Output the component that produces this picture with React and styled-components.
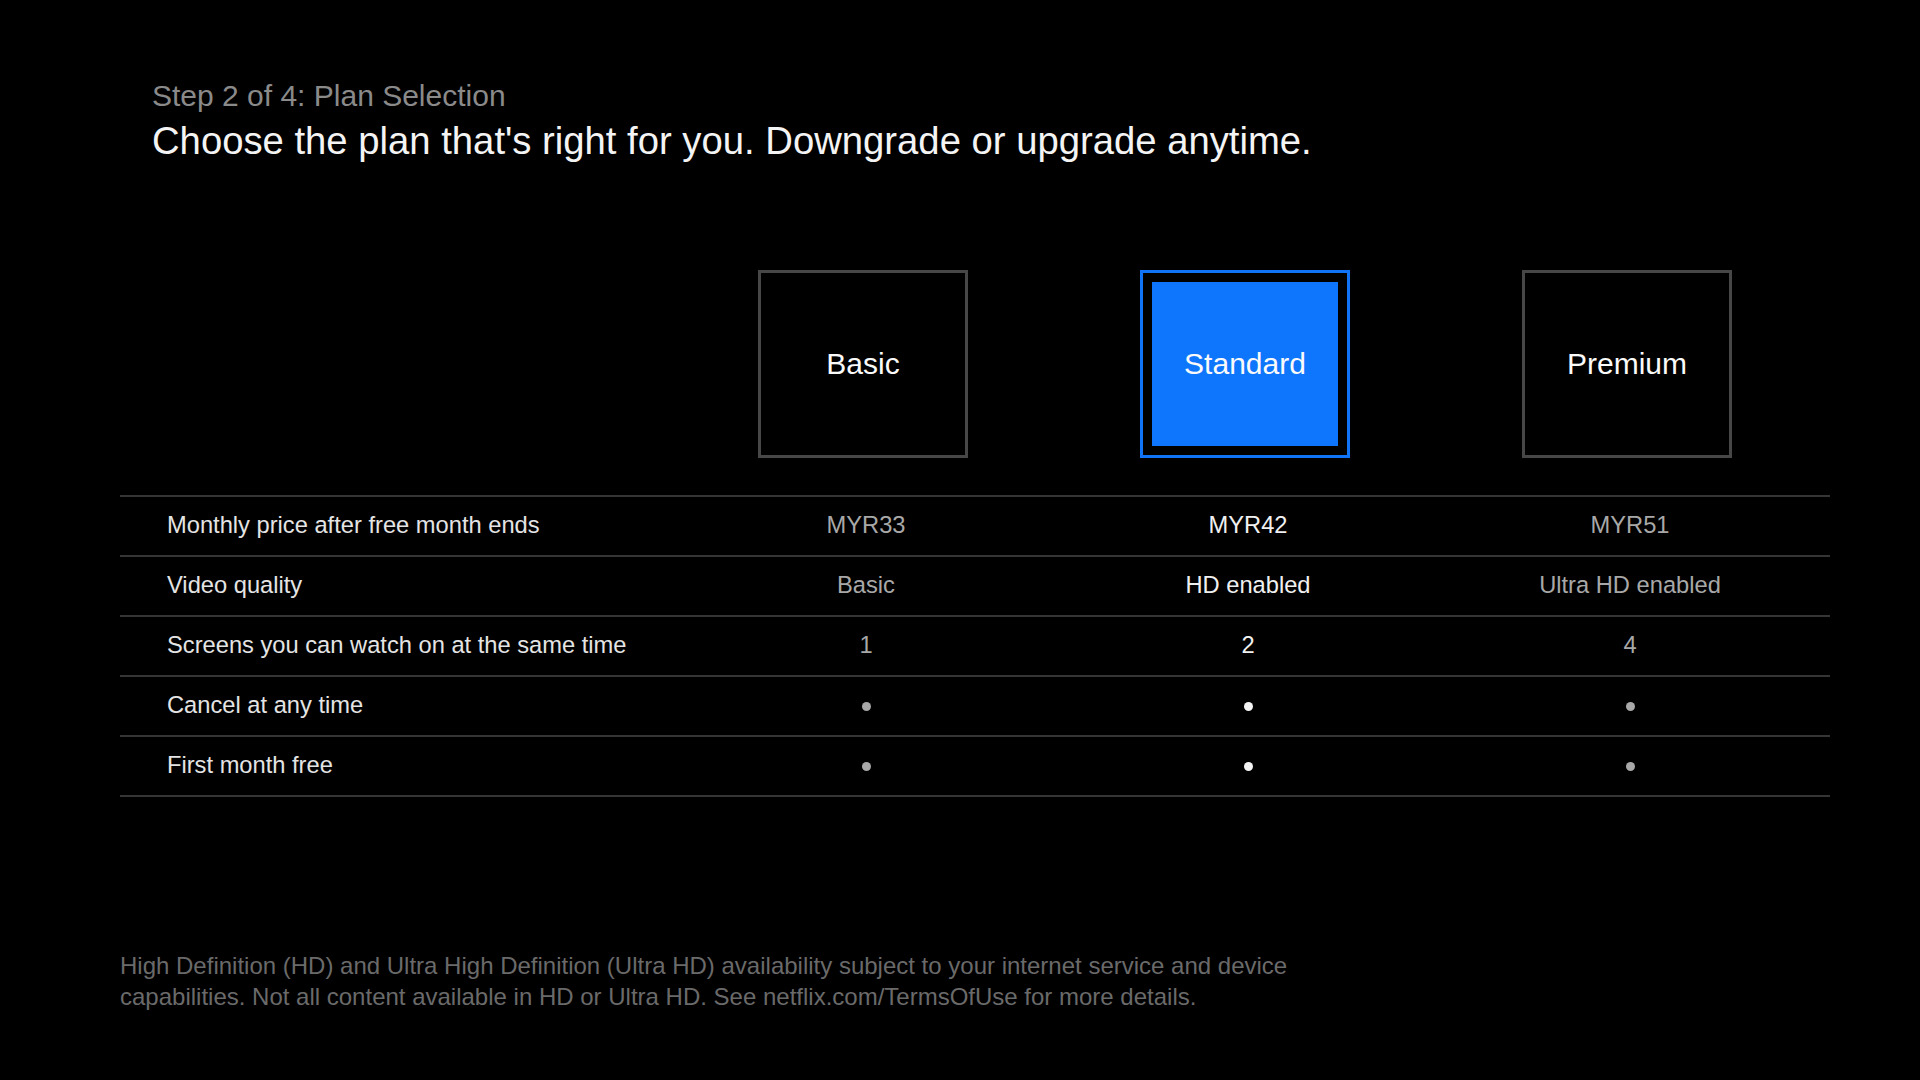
import React from "react";
import styled, { createGlobalStyle } from "styled-components";

const Global = createGlobalStyle`
  html, body {
    margin: 0;
    padding: 0;
    background: #000;
  }
  body {
    font-family: "Liberation Sans", Arial, Helvetica, sans-serif;
    color: #f2f2f2;
    -webkit-font-smoothing: antialiased;
  }
  #root { min-height: 1080px; background: #000; }
`;

const Page = styled.main`
  width: 1920px;
  height: 1080px;
  box-sizing: border-box;
  padding: 78px 90px 0 120px;
  background: #000;
`;

const Header = styled.header`
  padding-left: 32px;
`;

const Step = styled.div`
  font-size: 30px;
  line-height: 36px;
  color: #8a8a8a;
`;

const Title = styled.h1`
  margin: 4px 0 0;
  font-weight: 400;
  font-size: 38.25px;
  line-height: 46px;
  color: #f4f4f4;
`;

const Grid = styled.div`
  display: grid;
  grid-template-columns: 552px 382px 382px 382px 1fr;
  align-items: center;
`;

const PlansRow = styled(Grid)`
  margin-top: 106px;
`;

const PlanBox = styled.div`
  justify-self: center;
  width: 210px;
  height: 188px;
  box-sizing: border-box;
  border: 3px solid ${(p) => (p.$selected ? "#1174f6" : "#474747")};
  padding: ${(p) => (p.$selected ? "9px" : "0")};
  display: flex;
`;

const PlanInner = styled.div`
  flex: 1;
  display: flex;
  align-items: center;
  justify-content: center;
  background: ${(p) => (p.$selected ? "#0e76fd" : "transparent")};
  font-size: 30px;
  color: #fafafa;
`;

const Table = styled.div`
  margin-top: 37px;
  border-bottom: 2px solid #353535;
`;

const Row = styled(Grid)`
  height: 60px;
  box-sizing: border-box;
  padding-bottom: 2px;
  border-top: 2px solid #353535;
`;

const Label = styled.div`
  padding-left: 47px;
  font-size: 23.7px;
  color: #e4e4e4;
`;

const Value = styled.div`
  text-align: center;
  padding-left: 6px;
  font-size: 23.7px;
  color: ${(p) => (p.$selected ? "#f0f0f0" : "#a8a8a8")};
`;

const Dot = styled.span`
  display: inline-block;
  width: 9px;
  height: 9px;
  border-radius: 50%;
  vertical-align: middle;
  background: ${(p) => (p.$selected ? "#f4f4f4" : "#a8a8a8")};
`;

const Footer = styled.p`
  margin: 153px 0 0 0;
  max-width: 1200px;
  font-size: 24px;
  line-height: 31px;
  color: #6a6a6a;
`;

const plans = ["Basic", "Standard", "Premium"];
const selected = 1;

const rows = [
  { label: "Monthly price after free month ends", values: ["MYR33", "MYR42", "MYR51"] },
  { label: "Video quality", values: ["Basic", "HD enabled", "Ultra HD enabled"] },
  { label: "Screens you can watch on at the same time", values: ["1", "2", "4"] },
  { label: "Cancel at any time", dots: true },
  { label: "First month free", dots: true },
];

export default function App() {
  return (
    <>
      <Global />
      <Page>
        <Header>
          <Step>Step 2 of 4: Plan Selection</Step>
          <Title>Choose the plan that's right for you. Downgrade or upgrade anytime.</Title>
        </Header>

        <PlansRow>
          <div />
          {plans.map((p, i) => (
            <PlanBox key={p} $selected={i === selected}>
              <PlanInner $selected={i === selected}>{p}</PlanInner>
            </PlanBox>
          ))}
        </PlansRow>

        <Table>
          {rows.map((r) => (
            <Row key={r.label}>
              <Label>{r.label}</Label>
              {plans.map((p, i) => (
                <Value key={p} $selected={i === selected}>
                  {r.dots ? <Dot $selected={i === selected} /> : r.values[i]}
                </Value>
              ))}
            </Row>
          ))}
        </Table>

        <Footer>
          High Definition (HD) and Ultra High Definition (Ultra HD) availability subject to your internet service and device capabilities. Not all content available in HD or Ultra HD. See netflix.com/TermsOfUse for more details.
        </Footer>
      </Page>
    </>
  );
}
